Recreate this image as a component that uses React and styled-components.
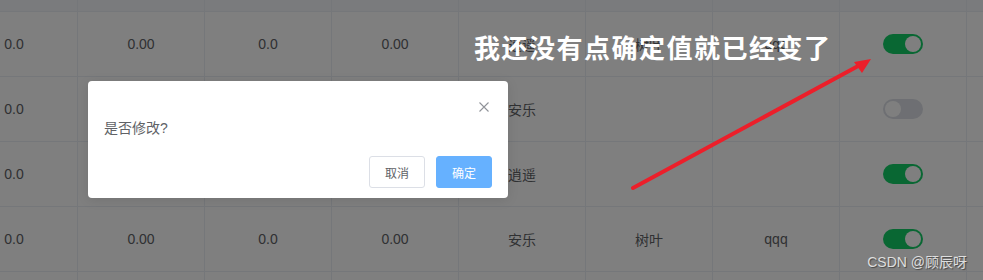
import React from "react";
import styled, { createGlobalStyle } from "styled-components";

const GlobalStyle = createGlobalStyle`
  html, body {
    margin: 0;
    padding: 0;
    width: 983px;
    height: 280px;
    overflow: hidden;
    background: #ffffff;
    font-family: "Liberation Sans", "Noto Sans CJK SC", sans-serif;
  }
`;

const rows = [
  { vals: ["0.0", "0.00", "0.0", "0.00", "逍遥", "树叶", "qqq"], on: true },
  { vals: ["0.0", "0.00", "0.0", "0.00", "安乐", "", ""], on: false },
  { vals: ["0.0", "0.00", "0.0", "0.00", "逍遥", "", ""], on: true },
  { vals: ["0.0", "0.00", "0.0", "0.00", "安乐", "树叶", "qqq"], on: true },
  { vals: ["", "", "", "", "", "", ""], on: true, hidden: true },
];

const Page = () => {
  return (
    <React.Fragment>
      <GlobalStyle />
      <Stage>
        <Table>
          <HeaderRow>
            {Array.from({ length: 9 }).map((_, i) => (
              <HeaderCell key={i} />
            ))}
          </HeaderRow>
          {rows.map((row, r) => (
            <Row key={r}>
              {row.vals.map((v, c) => (
                <Cell key={c}>{v}</Cell>
              ))}
              <Cell>{!row.hidden && <Switch on={row.on} />}</Cell>
              <Cell />
            </Row>
          ))}
        </Table>

        <Mask />

        <Dialog>
          <DialogHeader>
            <CloseBtn aria-label="close">
              <svg width="10" height="10" viewBox="0 0 10 10">
                <path d="M0.5 0.5 L9.5 9.5 M9.5 0.5 L0.5 9.5" stroke="#909399" strokeWidth="1.1" fill="none" />
              </svg>
            </CloseBtn>
          </DialogHeader>
          <DialogBody>是否修改?</DialogBody>
          <DialogFooter>
            <Button>取消</Button>
            <Button primary>确定</Button>
          </DialogFooter>
        </Dialog>

        <Note>我还没有点确定值就已经变了</Note>
        <Arrow width="983" height="280" viewBox="0 0 983 280">
          <line x1="633" y1="188" x2="860" y2="65" stroke="#ec1f2a" strokeWidth="4" strokeLinecap="round" />
          <polygon points="871,59 854,62 862,73" fill="#ec1f2a" />
        </Arrow>

        <Watermark>CSDN @顾辰呀</Watermark>
      </Stage>
    </React.Fragment>
  );
};
export default Page;

const Stage = styled.div`
  position: relative;
  width: 983px;
  height: 280px;
  overflow: hidden;
`;

const Table = styled.div`
  margin-left: -49px;
  width: 1143px;
  display: flex;
  flex-direction: column;
`;

const HeaderRow = styled.div`
  display: grid;
  grid-template-columns: repeat(9, 127px);
  height: 12px;
  background: #f5f7fa;
  border-bottom: 1px solid #ebeef5;
  box-sizing: border-box;
`;

const HeaderCell = styled.div`
  border-right: 1px solid #ebeef5;
`;

const Row = styled.div`
  display: grid;
  grid-template-columns: repeat(9, 127px);
  height: 65px;
  border-bottom: 1px solid #ebeef5;
  box-sizing: border-box;
`;

const Cell = styled.div`
  display: flex;
  align-items: center;
  justify-content: center;
  border-right: 1px solid #ebeef5;
  font-size: 14px;
  color: #606266;
`;

const Switch = styled.span`
  position: relative;
  display: inline-block;
  width: 40px;
  height: 20px;
  border-radius: 10px;
  box-sizing: border-box;
  background: ${(props) => (props.on ? "#13ce66" : "#dcdfe6")};
  &::after {
    content: "";
    position: absolute;
    top: 2px;
    left: ${(props) => (props.on ? "22px" : "2px")};
    width: 16px;
    height: 16px;
    border-radius: 50%;
    background: #ffffff;
  }
`;

const Mask = styled.div`
  position: absolute;
  inset: 0;
  background: rgba(0, 0, 0, 0.5);
`;

const Dialog = styled.div`
  position: absolute;
  left: 88px;
  top: 81px;
  width: 420px;
  box-sizing: border-box;
  background: #ffffff;
  border-radius: 4px;
  box-shadow: 0 2px 12px rgba(0, 0, 0, 0.1);
  display: flex;
  flex-direction: column;
`;

const DialogHeader = styled.div`
  display: flex;
  justify-content: flex-end;
  padding: 21px 19px 0 0;
`;

const CloseBtn = styled.span`
  display: block;
  width: 10px;
  height: 10px;
  line-height: 0;
`;

const DialogBody = styled.div`
  padding: 6px 16px 0;
  font-size: 14px;
  line-height: 20px;
  color: #606266;
`;

const DialogFooter = styled.div`
  display: flex;
  justify-content: flex-end;
  gap: 11px;
  padding: 18px 16px 10px;
`;

const Button = styled.button`
  height: 32px;
  padding: 0 15px;
  box-sizing: border-box;
  font-family: "Liberation Sans", "Noto Sans CJK SC", sans-serif;
  font-size: 12px;
  border-radius: 3px;
  cursor: pointer;
  border: 1px solid ${(props) => (props.primary ? "#66b1ff" : "#dcdfe6")};
  background: ${(props) => (props.primary ? "#66b1ff" : "#ffffff")};
  color: ${(props) => (props.primary ? "#ffffff" : "#606266")};
`;

const Note = styled.div`
  position: absolute;
  left: 474px;
  top: 34px;
  font-family: "Noto Sans CJK SC", sans-serif;
  font-size: 26px;
  line-height: 26px;
  font-weight: 700;
  letter-spacing: 1.5px;
  color: #ffffff;
  white-space: nowrap;
`;

const Arrow = styled.svg`
  position: absolute;
  left: 0;
  top: 0;
  pointer-events: none;
`;

const Watermark = styled.div`
  position: absolute;
  right: 16px;
  top: 253px;
  font-size: 14px;
  line-height: 18px;
  color: #dedede;
  text-shadow: 1px 1px 1px rgba(0, 0, 0, 0.45);
  white-space: nowrap;
`;
